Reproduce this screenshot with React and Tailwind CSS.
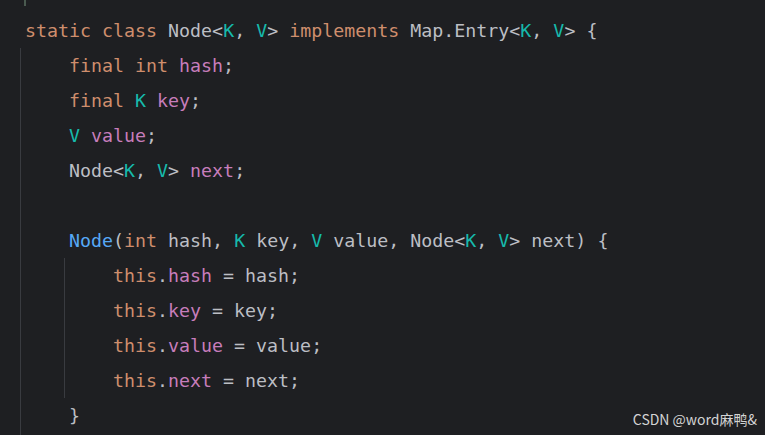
import React from 'react';

const kw = 'text-[#cf8e6d]';
const tp = 'text-[#16baac]';
const fd = 'text-[#c77dbb]';
const fn = 'text-[#56a8f5]';

const Line = ({ children }) => (
  <div className="h-[35px] leading-[35px] whitespace-pre">{children}</div>
);

const App = () => {
  return (
    <div
      className="relative w-[765px] h-[435px] overflow-hidden bg-[#1e1f22] text-[#bcbec4] text-[18.3px]"
      style={{ fontFamily: '"DejaVu Sans Mono", "Liberation Mono", monospace' }}
    >
      {/* outer scope guide */}
      <div className="ml-[24px] h-[6px] w-[2px] bg-[#4a5a50]" />

      <div className="pt-[7px] flex flex-col h-[429px]">
        <div className="pl-[25px]">
          <Line>
            <span className={kw}>static class </span>Node&lt;<span className={tp}>K</span>, <span className={tp}>V</span>&gt; <span className={kw}>implements </span>Map.Entry&lt;<span className={tp}>K</span>, <span className={tp}>V</span>&gt; {'{'}
          </Line>
        </div>

        {/* class body */}
        <div className="flex-1 ml-[20px] border-l border-[#393b40] pl-[48px]">
          <Line>
            <span className={kw}>final int </span><span className={fd}>hash</span>;
          </Line>
          <Line>
            <span className={kw}>final </span><span className={tp}>K </span><span className={fd}>key</span>;
          </Line>
          <Line>
            <span className={tp}>V </span><span className={fd}>value</span>;
          </Line>
          <Line>
            Node&lt;<span className={tp}>K</span>, <span className={tp}>V</span>&gt; <span className={fd}>next</span>;
          </Line>
          <Line> </Line>
          <Line>
            <span className={fn}>Node</span>(<span className={kw}>int </span>hash, <span className={tp}>K </span>key, <span className={tp}>V </span>value, Node&lt;<span className={tp}>K</span>, <span className={tp}>V</span>&gt; next) {'{'}
          </Line>

          {/* constructor body */}
          <div className="ml-[-5px] border-l border-[#393b40] pl-[48px]">
            <Line>
              <span className={kw}>this</span>.<span className={fd}>hash</span> = hash;
            </Line>
            <Line>
              <span className={kw}>this</span>.<span className={fd}>key</span> = key;
            </Line>
            <Line>
              <span className={kw}>this</span>.<span className={fd}>value</span> = value;
            </Line>
            <Line>
              <span className={kw}>this</span>.<span className={fd}>next</span> = next;
            </Line>
          </div>
          <Line>{'}'}</Line>
        </div>
      </div>

      {/* watermark */}
      <div
        className="absolute right-[8px] bottom-[6px] text-[14px] leading-[20px] text-[#d4d4d4]"
        style={{ fontFamily: '"Noto Sans CJK SC", "Noto Sans", sans-serif' }}
      >
        CSDN @word麻鸭&amp;
      </div>
    </div>
  );
};

export default App;
